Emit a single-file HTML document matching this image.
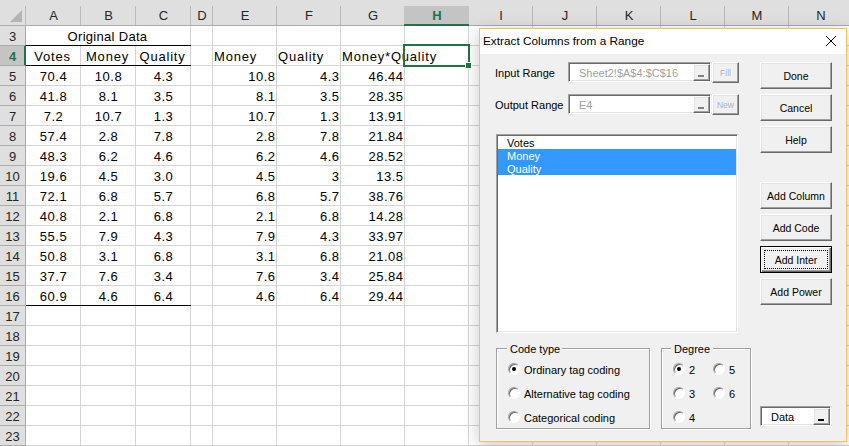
<!DOCTYPE html>
<html><head><meta charset="utf-8"><style>
*{margin:0;padding:0;box-sizing:border-box}
html,body{width:849px;height:446px;overflow:hidden;background:#fff}
body{position:relative;font-family:"Liberation Sans",sans-serif;color:#000}
.ab{position:absolute}
.gl{position:absolute;background:#d4d4d4}
.hl{position:absolute;background:#ababab}
.ct{position:absolute;font-size:13px;letter-spacing:0.8px;line-height:20px;white-space:nowrap;height:20px}
.nm{font-size:13px;letter-spacing:0.5px}
.ch{position:absolute;height:25px;line-height:25px;text-align:center;font-size:13px;color:#262626}
.rh{position:absolute;left:0;width:25px;height:20px;line-height:20px;text-align:center;font-size:13px;color:#262626}
.dl{font-size:11px;line-height:13px;position:absolute;white-space:nowrap}
.btn{position:absolute;background:#f0f0f0;border:1px solid;border-color:#fff #696969 #696969 #fff;box-shadow:inset -1px -1px 0 #a0a0a0,inset 1px 1px 0 #e3e3e3;font-size:10.5px;text-align:center;white-space:nowrap}
.sunk{position:absolute;background:#fff;border:1px solid;border-color:#a0a0a0 #fff #fff #a0a0a0;box-shadow:inset 1px 1px 0 #696969,inset -1px -1px 0 #e3e3e3}
.radio{position:absolute;width:12px;height:12px;border-radius:50%;background:#fff;border:1px solid;border-color:#a0a0a0 #fff #fff #a0a0a0;box-shadow:inset 1px 1px 0 #696969}
.dot{position:absolute;left:3px;top:3px;width:4px;height:4px;border-radius:50%;background:#000}
.grp{position:absolute;border:1px solid #a0a0a0;box-shadow:1px 1px 0 #fff,inset 1px 1px 0 #fff}
.focus{position:absolute;border:1px dotted #000}
</style></head><body>

<div class="gl" style="left:80px;top:25px;width:1px;height:421px"></div>
<div class="gl" style="left:135px;top:25px;width:1px;height:421px"></div>
<div class="gl" style="left:190px;top:25px;width:1px;height:421px"></div>
<div class="gl" style="left:212px;top:25px;width:1px;height:421px"></div>
<div class="gl" style="left:276px;top:25px;width:1px;height:421px"></div>
<div class="gl" style="left:340px;top:25px;width:1px;height:421px"></div>
<div class="gl" style="left:404px;top:25px;width:1px;height:421px"></div>
<div class="gl" style="left:468px;top:25px;width:1px;height:421px"></div>
<div class="gl" style="left:532px;top:25px;width:1px;height:421px"></div>
<div class="gl" style="left:596px;top:25px;width:1px;height:421px"></div>
<div class="gl" style="left:660px;top:25px;width:1px;height:421px"></div>
<div class="gl" style="left:724px;top:25px;width:1px;height:421px"></div>
<div class="gl" style="left:788px;top:25px;width:1px;height:421px"></div>
<div class="gl" style="left:852px;top:25px;width:1px;height:421px"></div>
<div class="gl" style="left:25px;top:45px;width:824px;height:1px"></div>
<div class="gl" style="left:25px;top:65px;width:824px;height:1px"></div>
<div class="gl" style="left:25px;top:85px;width:824px;height:1px"></div>
<div class="gl" style="left:25px;top:105px;width:824px;height:1px"></div>
<div class="gl" style="left:25px;top:125px;width:824px;height:1px"></div>
<div class="gl" style="left:25px;top:145px;width:824px;height:1px"></div>
<div class="gl" style="left:25px;top:165px;width:824px;height:1px"></div>
<div class="gl" style="left:25px;top:185px;width:824px;height:1px"></div>
<div class="gl" style="left:25px;top:205px;width:824px;height:1px"></div>
<div class="gl" style="left:25px;top:225px;width:824px;height:1px"></div>
<div class="gl" style="left:25px;top:245px;width:824px;height:1px"></div>
<div class="gl" style="left:25px;top:265px;width:824px;height:1px"></div>
<div class="gl" style="left:25px;top:285px;width:824px;height:1px"></div>
<div class="gl" style="left:25px;top:305px;width:824px;height:1px"></div>
<div class="gl" style="left:25px;top:325px;width:824px;height:1px"></div>
<div class="gl" style="left:25px;top:345px;width:824px;height:1px"></div>
<div class="gl" style="left:25px;top:365px;width:824px;height:1px"></div>
<div class="gl" style="left:25px;top:385px;width:824px;height:1px"></div>
<div class="gl" style="left:25px;top:405px;width:824px;height:1px"></div>
<div class="gl" style="left:25px;top:425px;width:824px;height:1px"></div>
<div class="gl" style="left:25px;top:445px;width:824px;height:1px"></div>
<div class="ab" style="left:26px;top:26px;width:164px;height:19px;background:#fff"></div>
<div class="ab" style="left:25px;top:45px;width:166px;height:1px;background:#000"></div>
<div class="ab" style="left:25px;top:65px;width:166px;height:1px;background:#000"></div>
<div class="ab" style="left:25px;top:305px;width:166px;height:1px;background:#000"></div>
<div class="ab" style="left:0;top:0;width:849px;height:25px;background:#dfdfdf"></div>
<div class="ab" style="left:0;top:25px;width:849px;height:1px;background:#ababab"></div>
<svg class="ab" style="left:0;top:0" width="25" height="25"><polygon points="10,22 22,22 22,10" fill="#b4b4b4"/></svg>
<div class="ab" style="left:404px;top:6px;width:65px;height:19px;background:#c4c4c4"></div>
<div class="ab" style="left:404px;top:24px;width:65px;height:2px;background:#217346"></div>
<div class="ch" style="left:26px;top:3px;width:55px;color:#262626">A</div>
<div class="ch" style="left:81px;top:3px;width:55px;color:#262626">B</div>
<div class="ch" style="left:136px;top:3px;width:55px;color:#262626">C</div>
<div class="ch" style="left:191px;top:3px;width:22px;color:#262626">D</div>
<div class="ch" style="left:213px;top:3px;width:64px;color:#262626">E</div>
<div class="ch" style="left:277px;top:3px;width:64px;color:#262626">F</div>
<div class="ch" style="left:341px;top:3px;width:64px;color:#262626">G</div>
<div class="ch" style="left:405px;top:3px;width:64px;color:#217346;font-weight:bold">H</div>
<div class="ch" style="left:469px;top:3px;width:64px;color:#262626">I</div>
<div class="ch" style="left:533px;top:3px;width:64px;color:#262626">J</div>
<div class="ch" style="left:597px;top:3px;width:64px;color:#262626">K</div>
<div class="ch" style="left:661px;top:3px;width:64px;color:#262626">L</div>
<div class="ch" style="left:725px;top:3px;width:64px;color:#262626">M</div>
<div class="ch" style="left:789px;top:3px;width:64px;color:#262626">N</div>
<div class="ab" style="left:25px;top:6px;width:1px;height:19px;background:#bababa"></div>
<div class="ab" style="left:80px;top:6px;width:1px;height:19px;background:#bababa"></div>
<div class="ab" style="left:135px;top:6px;width:1px;height:19px;background:#bababa"></div>
<div class="ab" style="left:190px;top:6px;width:1px;height:19px;background:#bababa"></div>
<div class="ab" style="left:212px;top:6px;width:1px;height:19px;background:#bababa"></div>
<div class="ab" style="left:276px;top:6px;width:1px;height:19px;background:#bababa"></div>
<div class="ab" style="left:340px;top:6px;width:1px;height:19px;background:#bababa"></div>
<div class="ab" style="left:532px;top:6px;width:1px;height:19px;background:#bababa"></div>
<div class="ab" style="left:596px;top:6px;width:1px;height:19px;background:#bababa"></div>
<div class="ab" style="left:660px;top:6px;width:1px;height:19px;background:#bababa"></div>
<div class="ab" style="left:724px;top:6px;width:1px;height:19px;background:#bababa"></div>
<div class="ab" style="left:788px;top:6px;width:1px;height:19px;background:#bababa"></div>
<div class="ab" style="left:0;top:26px;width:25px;height:420px;background:#dfdfdf"></div>
<div class="ab" style="left:25px;top:25px;width:1px;height:421px;background:#ababab"></div>
<div class="ab" style="left:0;top:46px;width:25px;height:19px;background:#c4c4c4"></div>
<div class="ab" style="left:24px;top:45px;width:2px;height:21px;background:#217346"></div>
<div class="rh" style="top:27px;color:#262626">3</div>
<div class="hl" style="left:0;top:45px;width:25px;height:1px"></div>
<div class="rh" style="top:47px;color:#217346;font-weight:bold">4</div>
<div class="hl" style="left:0;top:65px;width:25px;height:1px"></div>
<div class="rh" style="top:67px;color:#262626">5</div>
<div class="hl" style="left:0;top:85px;width:25px;height:1px"></div>
<div class="rh" style="top:87px;color:#262626">6</div>
<div class="hl" style="left:0;top:105px;width:25px;height:1px"></div>
<div class="rh" style="top:107px;color:#262626">7</div>
<div class="hl" style="left:0;top:125px;width:25px;height:1px"></div>
<div class="rh" style="top:127px;color:#262626">8</div>
<div class="hl" style="left:0;top:145px;width:25px;height:1px"></div>
<div class="rh" style="top:147px;color:#262626">9</div>
<div class="hl" style="left:0;top:165px;width:25px;height:1px"></div>
<div class="rh" style="top:167px;color:#262626">10</div>
<div class="hl" style="left:0;top:185px;width:25px;height:1px"></div>
<div class="rh" style="top:187px;color:#262626">11</div>
<div class="hl" style="left:0;top:205px;width:25px;height:1px"></div>
<div class="rh" style="top:207px;color:#262626">12</div>
<div class="hl" style="left:0;top:225px;width:25px;height:1px"></div>
<div class="rh" style="top:227px;color:#262626">13</div>
<div class="hl" style="left:0;top:245px;width:25px;height:1px"></div>
<div class="rh" style="top:247px;color:#262626">14</div>
<div class="hl" style="left:0;top:265px;width:25px;height:1px"></div>
<div class="rh" style="top:267px;color:#262626">15</div>
<div class="hl" style="left:0;top:285px;width:25px;height:1px"></div>
<div class="rh" style="top:287px;color:#262626">16</div>
<div class="hl" style="left:0;top:305px;width:25px;height:1px"></div>
<div class="rh" style="top:307px;color:#262626">17</div>
<div class="hl" style="left:0;top:325px;width:25px;height:1px"></div>
<div class="rh" style="top:327px;color:#262626">18</div>
<div class="hl" style="left:0;top:345px;width:25px;height:1px"></div>
<div class="rh" style="top:347px;color:#262626">19</div>
<div class="hl" style="left:0;top:365px;width:25px;height:1px"></div>
<div class="rh" style="top:367px;color:#262626">20</div>
<div class="hl" style="left:0;top:385px;width:25px;height:1px"></div>
<div class="rh" style="top:387px;color:#262626">21</div>
<div class="hl" style="left:0;top:405px;width:25px;height:1px"></div>
<div class="rh" style="top:407px;color:#262626">22</div>
<div class="hl" style="left:0;top:425px;width:25px;height:1px"></div>
<div class="rh" style="top:427px;color:#262626">23</div>
<div class="hl" style="left:0;top:445px;width:25px;height:1px"></div>
<div class="ct" style="left:25px;top:27px;width:165px;text-align:center;letter-spacing:0.3px">Original Data</div>
<div class="ct" style="left:25px;top:47px;width:55px;text-align:center">Votes</div>
<div class="ct" style="left:80px;top:47px;width:55px;text-align:center">Money</div>
<div class="ct" style="left:135px;top:47px;width:55px;text-align:center">Quality</div>
<div class="ct" style="left:214px;top:47px">Money</div>
<div class="ct" style="left:278px;top:47px">Quality</div>
<div class="ct" style="left:342px;top:47px">Money*Quality</div>
<div class="ct nm" style="left:26px;top:67px;width:55px;text-align:center">70.4</div>
<div class="ct nm" style="left:81px;top:67px;width:55px;text-align:center">10.8</div>
<div class="ct nm" style="left:136px;top:67px;width:55px;text-align:center">4.3</div>
<div class="ct nm" style="left:212px;top:67px;width:63.5px;text-align:right">10.8</div>
<div class="ct nm" style="left:276px;top:67px;width:63.5px;text-align:right">4.3</div>
<div class="ct nm" style="left:340px;top:67px;width:63.5px;text-align:right">46.44</div>
<div class="ct nm" style="left:26px;top:87px;width:55px;text-align:center">41.8</div>
<div class="ct nm" style="left:81px;top:87px;width:55px;text-align:center">8.1</div>
<div class="ct nm" style="left:136px;top:87px;width:55px;text-align:center">3.5</div>
<div class="ct nm" style="left:212px;top:87px;width:63.5px;text-align:right">8.1</div>
<div class="ct nm" style="left:276px;top:87px;width:63.5px;text-align:right">3.5</div>
<div class="ct nm" style="left:340px;top:87px;width:63.5px;text-align:right">28.35</div>
<div class="ct nm" style="left:26px;top:107px;width:55px;text-align:center">7.2</div>
<div class="ct nm" style="left:81px;top:107px;width:55px;text-align:center">10.7</div>
<div class="ct nm" style="left:136px;top:107px;width:55px;text-align:center">1.3</div>
<div class="ct nm" style="left:212px;top:107px;width:63.5px;text-align:right">10.7</div>
<div class="ct nm" style="left:276px;top:107px;width:63.5px;text-align:right">1.3</div>
<div class="ct nm" style="left:340px;top:107px;width:63.5px;text-align:right">13.91</div>
<div class="ct nm" style="left:26px;top:127px;width:55px;text-align:center">57.4</div>
<div class="ct nm" style="left:81px;top:127px;width:55px;text-align:center">2.8</div>
<div class="ct nm" style="left:136px;top:127px;width:55px;text-align:center">7.8</div>
<div class="ct nm" style="left:212px;top:127px;width:63.5px;text-align:right">2.8</div>
<div class="ct nm" style="left:276px;top:127px;width:63.5px;text-align:right">7.8</div>
<div class="ct nm" style="left:340px;top:127px;width:63.5px;text-align:right">21.84</div>
<div class="ct nm" style="left:26px;top:147px;width:55px;text-align:center">48.3</div>
<div class="ct nm" style="left:81px;top:147px;width:55px;text-align:center">6.2</div>
<div class="ct nm" style="left:136px;top:147px;width:55px;text-align:center">4.6</div>
<div class="ct nm" style="left:212px;top:147px;width:63.5px;text-align:right">6.2</div>
<div class="ct nm" style="left:276px;top:147px;width:63.5px;text-align:right">4.6</div>
<div class="ct nm" style="left:340px;top:147px;width:63.5px;text-align:right">28.52</div>
<div class="ct nm" style="left:26px;top:167px;width:55px;text-align:center">19.6</div>
<div class="ct nm" style="left:81px;top:167px;width:55px;text-align:center">4.5</div>
<div class="ct nm" style="left:136px;top:167px;width:55px;text-align:center">3.0</div>
<div class="ct nm" style="left:212px;top:167px;width:63.5px;text-align:right">4.5</div>
<div class="ct nm" style="left:276px;top:167px;width:63.5px;text-align:right">3</div>
<div class="ct nm" style="left:340px;top:167px;width:63.5px;text-align:right">13.5</div>
<div class="ct nm" style="left:26px;top:187px;width:55px;text-align:center">72.1</div>
<div class="ct nm" style="left:81px;top:187px;width:55px;text-align:center">6.8</div>
<div class="ct nm" style="left:136px;top:187px;width:55px;text-align:center">5.7</div>
<div class="ct nm" style="left:212px;top:187px;width:63.5px;text-align:right">6.8</div>
<div class="ct nm" style="left:276px;top:187px;width:63.5px;text-align:right">5.7</div>
<div class="ct nm" style="left:340px;top:187px;width:63.5px;text-align:right">38.76</div>
<div class="ct nm" style="left:26px;top:207px;width:55px;text-align:center">40.8</div>
<div class="ct nm" style="left:81px;top:207px;width:55px;text-align:center">2.1</div>
<div class="ct nm" style="left:136px;top:207px;width:55px;text-align:center">6.8</div>
<div class="ct nm" style="left:212px;top:207px;width:63.5px;text-align:right">2.1</div>
<div class="ct nm" style="left:276px;top:207px;width:63.5px;text-align:right">6.8</div>
<div class="ct nm" style="left:340px;top:207px;width:63.5px;text-align:right">14.28</div>
<div class="ct nm" style="left:26px;top:227px;width:55px;text-align:center">55.5</div>
<div class="ct nm" style="left:81px;top:227px;width:55px;text-align:center">7.9</div>
<div class="ct nm" style="left:136px;top:227px;width:55px;text-align:center">4.3</div>
<div class="ct nm" style="left:212px;top:227px;width:63.5px;text-align:right">7.9</div>
<div class="ct nm" style="left:276px;top:227px;width:63.5px;text-align:right">4.3</div>
<div class="ct nm" style="left:340px;top:227px;width:63.5px;text-align:right">33.97</div>
<div class="ct nm" style="left:26px;top:247px;width:55px;text-align:center">50.8</div>
<div class="ct nm" style="left:81px;top:247px;width:55px;text-align:center">3.1</div>
<div class="ct nm" style="left:136px;top:247px;width:55px;text-align:center">6.8</div>
<div class="ct nm" style="left:212px;top:247px;width:63.5px;text-align:right">3.1</div>
<div class="ct nm" style="left:276px;top:247px;width:63.5px;text-align:right">6.8</div>
<div class="ct nm" style="left:340px;top:247px;width:63.5px;text-align:right">21.08</div>
<div class="ct nm" style="left:26px;top:267px;width:55px;text-align:center">37.7</div>
<div class="ct nm" style="left:81px;top:267px;width:55px;text-align:center">7.6</div>
<div class="ct nm" style="left:136px;top:267px;width:55px;text-align:center">3.4</div>
<div class="ct nm" style="left:212px;top:267px;width:63.5px;text-align:right">7.6</div>
<div class="ct nm" style="left:276px;top:267px;width:63.5px;text-align:right">3.4</div>
<div class="ct nm" style="left:340px;top:267px;width:63.5px;text-align:right">25.84</div>
<div class="ct nm" style="left:26px;top:287px;width:55px;text-align:center">60.9</div>
<div class="ct nm" style="left:81px;top:287px;width:55px;text-align:center">4.6</div>
<div class="ct nm" style="left:136px;top:287px;width:55px;text-align:center">6.4</div>
<div class="ct nm" style="left:212px;top:287px;width:63.5px;text-align:right">4.6</div>
<div class="ct nm" style="left:276px;top:287px;width:63.5px;text-align:right">6.4</div>
<div class="ct nm" style="left:340px;top:287px;width:63.5px;text-align:right">29.44</div>
<div class="ab" style="left:403px;top:44px;width:67px;height:23px;border:2px solid #217346"></div>
<div class="ab" style="left:466px;top:63px;width:5px;height:5px;background:#217346;box-shadow:0 0 0 1px #fff"></div>
<div class="ab" style="left:479px;top:28px;width:368px;height:414px;box-shadow:0 3px 16px rgba(0,0,0,0.22)"></div>
<div class="ab" style="left:479px;top:28px;width:368px;height:414px;border:1px solid #f5c159;background:#f0f0f0;overflow:hidden">
<div class="ab" style="left:0;top:0;width:366px;height:25px;background:#fff"></div>
<div class="dl" style="left:3px;top:5px;font-size:11.8px;line-height:14px">Extract Columns from a Range</div>
<svg class="ab" style="left:346px;top:7px" width="10" height="10" shape-rendering="crispEdges" fill="#000"><rect x="0" y="0" width="1" height="1"/><rect x="9" y="0" width="1" height="1"/><rect x="1" y="1" width="1" height="1"/><rect x="8" y="1" width="1" height="1"/><rect x="2" y="2" width="1" height="1"/><rect x="7" y="2" width="1" height="1"/><rect x="3" y="3" width="1" height="1"/><rect x="6" y="3" width="1" height="1"/><rect x="4" y="4" width="1" height="1"/><rect x="5" y="4" width="1" height="1"/><rect x="5" y="5" width="1" height="1"/><rect x="4" y="5" width="1" height="1"/><rect x="6" y="6" width="1" height="1"/><rect x="3" y="6" width="1" height="1"/><rect x="7" y="7" width="1" height="1"/><rect x="2" y="7" width="1" height="1"/><rect x="8" y="8" width="1" height="1"/><rect x="1" y="8" width="1" height="1"/><rect x="9" y="9" width="1" height="1"/><rect x="0" y="9" width="1" height="1"/></svg>
<div class="dl" style="left:15px;top:38px;">Input Range</div>
<div class="dl" style="left:15px;top:70px;">Output Range</div>
<div class="sunk" style="left:88px;top:33px;width:143px;height:20px;"></div>
<div class="dl" style="left:99px;top:38px;color:#a0a0a0">Sheet2!$A$4:$C$16</div>
<div class="btn" style="left:213px;top:35px;width:17px;height:17px;"></div><div class="ab" style="left:218px;top:46px;width:6px;height:2px;background:#808080"></div>
<div class="sunk" style="left:88px;top:65px;width:143px;height:20px;"></div>
<div class="dl" style="left:99px;top:70px;color:#a0a0a0">E4</div>
<div class="btn" style="left:213px;top:67px;width:17px;height:17px;"></div><div class="ab" style="left:218px;top:78px;width:6px;height:2px;background:#808080"></div>
<div class="btn" style="left:232px;top:33px;width:27px;height:21px;font-size:8.5px;color:#a8b4c8;line-height:20px">Fill</div>
<div class="btn" style="left:232px;top:65px;width:27px;height:21px;font-size:8.5px;color:#a8b4c8;line-height:20px">New</div>
<div class="btn" style="left:280px;top:33px;width:72px;height:27px;line-height:26px">Done</div>
<div class="btn" style="left:280px;top:65px;width:72px;height:27px;line-height:26px">Cancel</div>
<div class="btn" style="left:280px;top:97px;width:72px;height:27px;line-height:26px">Help</div>
<div class="btn" style="left:280px;top:153px;width:72px;height:27px;line-height:26px">Add Column</div>
<div class="btn" style="left:280px;top:185px;width:72px;height:27px;line-height:26px">Add Code</div>
<div class="btn" style="left:280px;top:217px;width:72px;height:27px;line-height:26px;border-color:#000;box-shadow:inset 1px 1px 0 #fff,inset -1px -1px 0 #696969,inset -2px -2px 0 #a0a0a0">Add Inter</div>
<div class="focus" style="left:284px;top:221px;width:64px;height:19px;"></div>
<div class="btn" style="left:280px;top:249px;width:72px;height:27px;line-height:26px">Add Power</div>
<div class="sunk" style="left:16px;top:105px;width:242px;height:199px;"></div>
<div class="ab" style="left:18px;top:120px;width:238px;height:26px;background:#3399ff"></div>
<div class="dl" style="left:27px;top:108px;">Votes</div>
<div class="dl" style="left:27px;top:121px;color:#fff">Money</div>
<div class="dl" style="left:27px;top:134px;color:#fff">Quality</div>
<div class="grp" style="left:16px;top:319px;width:154px;height:81px;"></div>
<div class="dl" style="left:27px;top:314px;background:#f0f0f0;padding:0 2px 0 3px">Code type</div>
<div class="grp" style="left:181px;top:319px;width:90px;height:81px;"></div>
<div class="dl" style="left:191px;top:314px;background:#f0f0f0;padding:0 3px">Degree</div>
<div class="radio" style="left:28px;top:334px"><div class="dot"></div></div><div class="dl" style="left:44px;top:335px;">Ordinary tag coding</div>
<div class="radio" style="left:28px;top:358px"></div><div class="dl" style="left:44px;top:359px;">Alternative tag coding</div>
<div class="radio" style="left:28px;top:382px"></div><div class="dl" style="left:44px;top:383px;">Categorical coding</div>
<div class="radio" style="left:193px;top:334px"><div class="dot"></div></div><div class="dl" style="left:209px;top:335px;">2</div>
<div class="radio" style="left:193px;top:358px"></div><div class="dl" style="left:209px;top:359px;">3</div>
<div class="radio" style="left:193px;top:382px"></div><div class="dl" style="left:209px;top:383px;">4</div>
<div class="radio" style="left:233px;top:334px"></div><div class="dl" style="left:249px;top:335px;">5</div>
<div class="radio" style="left:233px;top:358px"></div><div class="dl" style="left:249px;top:359px;">6</div>
<div class="sunk" style="left:280px;top:377px;width:71px;height:20px;"></div>
<div class="dl" style="left:291px;top:382px;">Data</div>
<div class="btn" style="left:333px;top:379px;width:17px;height:17px"></div>
<div class="ab" style="left:338px;top:390px;width:6px;height:2px;background:#000"></div>
</div>
</body></html>
